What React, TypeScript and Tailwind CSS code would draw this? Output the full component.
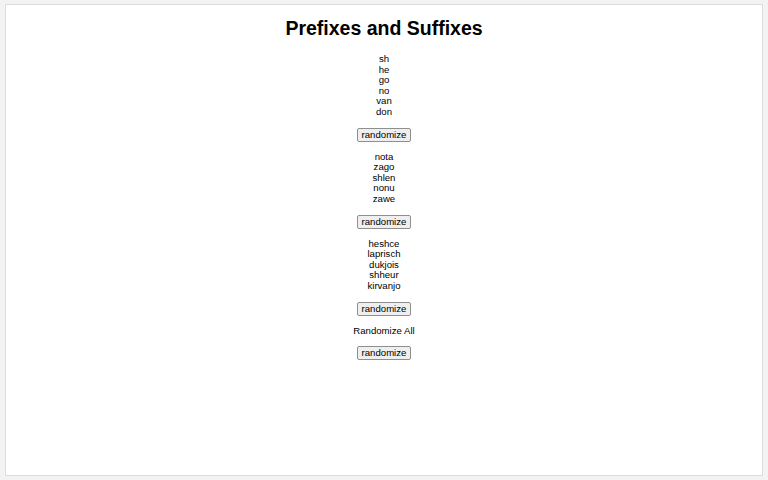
const groups = [
  ["sh", "he", "go", "no", "van", "don"],
  ["nota", "zago", "shlen", "nonu", "zawe"],
  ["heshce", "laprisch", "dukjois", "shheur", "kirvanjo"],
]

function RandomizeButton() {
  return (
    <button className="mt-[10px] mb-[10px] h-[14px] px-[4px] border border-[#8f8f8f] rounded-[2px] bg-[#efefef] text-[9.6px] leading-[12px] text-black">
      randomize
    </button>
  )
}

export default function App() {
  return (
    <div
      className="h-[480px] bg-[#f3f3f3] px-[5px] py-[4px]"
      style={{ fontFamily: '"Liberation Sans", Arial, sans-serif' }}
    >
      <div className="h-full bg-white border border-[#dcdcdc] flex flex-col items-center text-black">
        <h1 className="mt-[12px] mb-[15px] text-[19.5px] leading-[22px] font-bold">
          Prefixes and Suffixes
        </h1>
        {groups.map((g, i) => (
          <div key={i} className="flex flex-col items-center">
            <div className="flex flex-col items-center text-[9.6px] leading-[10.6px]">
              {g.map((w) => (
                <span key={w}>{w}</span>
              ))}
            </div>
            <RandomizeButton />
          </div>
        ))}
        <div className="flex flex-col items-center">
          <p className="text-[9.6px] leading-[10.6px]">Randomize All</p>
          <RandomizeButton />
        </div>
      </div>
    </div>
  )
}
